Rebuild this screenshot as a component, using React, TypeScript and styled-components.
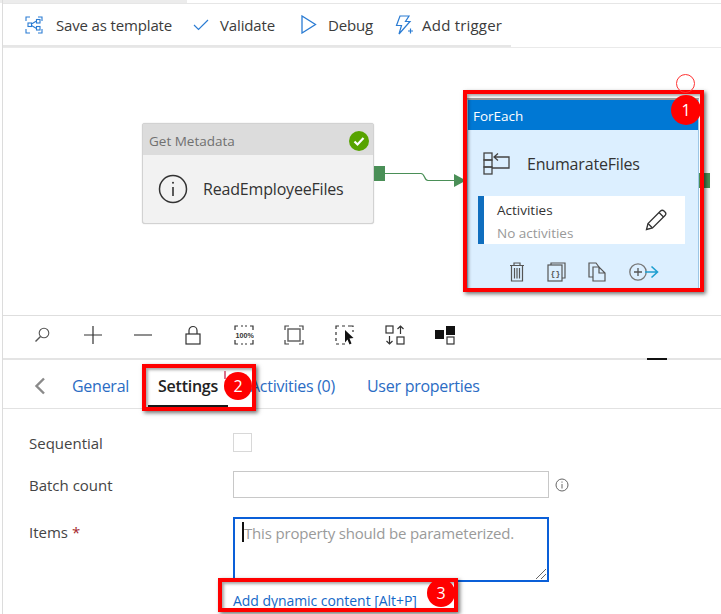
import React from 'react';
import styled, { createGlobalStyle } from 'styled-components';

const Global = createGlobalStyle`
  html, body { margin: 0; padding: 0; background: #fff; }
  body { font-family: "Open Sans", "Noto Sans", "Liberation Sans", sans-serif; color: #333; }
`;

const Page = styled.div`
  position: relative;
  width: 721px;
  height: 614px;
  overflow: hidden;
  background: #fff;
  box-sizing: border-box;
  padding-left: 3px;
  &::before {
    content: "";
    position: absolute;
    left: 2px;
    top: 0;
    bottom: 0;
    width: 1px;
    background: #dcdcdc;
  }
`;

const TopStrip = styled.div`
  height: 3px;
  margin-left: -3px;
  width: 187px;
  background: #ececec;
`;

const TopLine = styled.div`
  height: 1px;
  background: #e6e6e6;
`;

const Toolbar = styled.div`
  display: flex;
  align-items: center;
  height: 43px;
  width: 508px;
  padding-left: 22px;
  box-sizing: border-box;
  border-bottom: 2px solid #e6e6e6;
`;

const ToolButton = styled.div<{ $gap: number; $end: number; $track?: number }>`
  display: flex;
  align-items: center;
  gap: ${p => p.$gap}px;
  margin-right: ${p => p.$end}px;
  font-size: 15px;
  letter-spacing: ${p => p.$track ?? -0.15}px;
  color: #3b3b3b;
  white-space: nowrap;
`;

const Canvas = styled.div`
  position: relative;
  height: 267px;
  border-top: 1px solid #eaeaea;
  border-bottom: 1px solid #dedede;
`;

const MetaNode = styled.div`
  position: absolute;
  left: 139px;
  top: 75px;
  width: 232px;
  height: 101px;
  box-sizing: border-box;
  border: 1px solid #d2d2d2;
  border-radius: 3px;
  background: #f2f2f2;
  box-shadow: 0 0 1px #bbb;
`;

const MetaHeader = styled.div`
  height: 31px;
  box-sizing: border-box;
  display: flex;
  align-items: center;
  justify-content: space-between;
  padding: 2px 4px 0 6px;
  background: #dcdcdc;
  font-size: 13.5px;
  color: #707070;
`;

const NodeBody = styled.div<{ $pad: number; $gap: number }>`
  display: flex;
  align-items: center;
  gap: ${p => p.$gap}px;
  padding-left: ${p => p.$pad}px;
  font-size: 16px;
  letter-spacing: -0.18px;
  color: #333;
`;

const MetaBody = styled(NodeBody)`
  height: 67px;
`;

const Wire = styled.svg`
  position: absolute;
  left: 371px;
  top: 118px;
`;

const OutPort = styled.div`
  position: absolute;
  left: 695px;
  top: 125px;
  width: 12px;
  height: 15px;
  background: #4a8f57;
`;

const EachNode = styled.div`
  position: absolute;
  left: 464px;
  top: 50px;
  width: 232px;
  height: 194px;
  box-sizing: border-box;
  border: 1px solid #9cc6e6;
  border-top: 2px solid #9a9a9a;
  background: #dcefff;
`;

const EachHeader = styled.div`
  height: 30px;
  box-sizing: border-box;
  display: flex;
  align-items: center;
  padding: 2px 0 0 5px;
  background: #0078d4;
  color: #fff;
  font-size: 13.5px;
`;

const EachBody = styled(NodeBody)`
  height: 66px;
  box-sizing: border-box;
  padding-top: 2px;
`;

const ActivityCard = styled.div`
  position: relative;
  height: 48px;
  margin: 0 13px 0 10px;
  box-sizing: border-box;
  padding: 6px 0 0 13px;
  background: #fff;
  border-left: 6px solid #106ebe;
`;

const ActivityTitle = styled.div`
  font-size: 13.5px;
  line-height: 17px;
  color: #333;
`;

const ActivitySub = styled.div`
  font-size: 13.5px;
  line-height: 17px;
  margin-top: 6px;
  color: #999;
`;

const PencilSlot = styled.svg`
  position: absolute;
  right: 18px;
  top: 13px;
`;

const NodeActions = styled.div`
  display: flex;
  align-items: center;
  padding: 18px 0 0 41px;
  gap: 22px;
`;

const CanvasBar = styled.div`
  display: grid;
  grid-template-columns: repeat(9, 50.4px);
  justify-items: center;
  align-items: center;
  height: 42px;
  box-sizing: border-box;
  padding: 0 0 4px 14px;
`;

const CanvasTool = styled.svg`
  display: block;
  color: #333;
`;

const Divider = styled.div`
  position: relative;
  height: 2px;
  background: #e4e4e4;
  &::after {
    content: "";
    position: absolute;
    left: 644px;
    top: 0;
    width: 20px;
    height: 2px;
    background: #111;
  }
`;

const Tabs = styled.div`
  display: flex;
  align-items: stretch;
  height: 49px;
  border-bottom: 1px solid #e2e2e2;
  box-sizing: border-box;
  padding-left: 30px;
`;

const Chevron = styled.svg`
  align-self: center;
  margin-right: 25px;
  margin-top: 4px;
`;

const Tab = styled.div<{ $active?: boolean; $end: number }>`
  display: flex;
  align-items: center;
  padding-top: 4px;
  padding-left: ${p => (p.$active ? 10 : 0)}px;
  padding-right: ${p => (p.$active ? 10 : 0)}px;
  margin-right: ${p => p.$end}px;
  font-size: 16px;
  letter-spacing: -0.26px;
  white-space: nowrap;
  color: ${p => (p.$active ? '#222' : '#2b6cc4')};
  font-weight: ${p => (p.$active ? 600 : 400)};
  box-shadow: ${p => (p.$active ? 'inset 0 -3px 0 #1a1a1a' : 'none')};
`;

const Form = styled.div`
  display: grid;
  grid-template-columns: 204px 316px 1fr;
  grid-template-rows: 19px 27px 65px auto;
  row-gap: 19px;
  padding: 24px 0 0 26px;
  align-items: center;
  font-size: 15px;
  color: #444;
`;

const FieldLabel = styled.div<{ $top?: boolean }>`
  align-self: ${p => (p.$top ? 'start' : 'center')};
  padding-top: ${p => (p.$top ? 5 : 1)}px;
  grid-column: 1;
`;

const Required = styled.span`
  color: #a4262c;
`;

const Check = styled.div`
  grid-column: 2;
  width: 19px;
  height: 19px;
  box-sizing: border-box;
  border: 1px solid #d8d8d8;
`;

const TextBox = styled.div`
  grid-column: 2;
  height: 27px;
  box-sizing: border-box;
  border: 1px solid #c8c8c8;
`;

const InfoSlot = styled.svg`
  grid-column: 3;
  margin-left: 6px;
`;

const Spacer = styled.div`
  grid-column: 3;
`;

const AreaBox = styled.div`
  position: relative;
  grid-column: 2;
  height: 65px;
  box-sizing: border-box;
  border: 2px solid #0a5fd8;
  padding: 3px 0 0 9px;
  font-size: 15px;
  letter-spacing: -0.17px;
  line-height: 22px;
  color: #9a9a9a;
  white-space: nowrap;
`;

const Caret = styled.span`
  position: absolute;
  left: 7px;
  top: 3px;
  width: 2px;
  height: 20px;
  background: #111;
`;

const Grip = styled.svg`
  position: absolute;
  right: 0;
  bottom: 0;
`;

const DynLink = styled.div`
  grid-column: 2;
  margin-top: -8px;
  font-size: 14px;
  letter-spacing: -0.05px;
  line-height: 16px;
  color: #1468c8;
  white-space: nowrap;
`;

const RedFrame = styled.div<{ $x: number; $y: number; $w: number; $h: number }>`
  position: absolute;
  left: ${p => p.$x}px;
  top: ${p => p.$y}px;
  width: ${p => p.$w}px;
  height: ${p => p.$h}px;
  box-sizing: border-box;
  border: 4px solid #f00;
  box-shadow: 2px 2px 4px rgba(0, 0, 0, 0.55), inset 2px 2px 3px rgba(0, 0, 0, 0.35);
  pointer-events: none;
`;

const Badge = styled.div<{ $x: number; $y: number; $d: number }>`
  position: absolute;
  left: ${p => p.$x}px;
  top: ${p => p.$y}px;
  width: ${p => p.$d}px;
  height: ${p => p.$d}px;
  border-radius: 50%;
  background: #f00;
  color: #fff;
  font-size: 16px;
  display: flex;
  align-items: center;
  justify-content: center;
`;

const Ring = styled.div`
  position: absolute;
  left: 676px;
  top: 74px;
  width: 19px;
  height: 19px;
  box-sizing: border-box;
  border: 1.5px solid #f33;
  border-radius: 50%;
`;

const TabRemnant = styled.div`
  position: absolute;
  left: 224px;
  top: 371px;
  width: 2px;
  height: 8px;
  background: #d9708a;
`;

const blue = '#2b7cd3';

const SaveIcon = () => (
  <svg width="18" height="18" viewBox="0 0 18 18" fill="none" stroke={blue} strokeWidth="1.1">
    <path d="M1 5V1h4M13 1h4v4M1 13v4h4M13 17h4v-4" />
    <rect x="11.5" y="3.5" width="3.5" height="3.5" />
    <rect x="11.5" y="10.5" width="3.5" height="3.5" />
    <rect x="3" y="7" width="3.5" height="3.5" />
    <path d="M6.5 8l5-3M6.5 9.5l5 3" />
  </svg>
);
const CheckIcon = () => (
  <svg width="16" height="12" viewBox="0 0 16 12" fill="none" stroke={blue} strokeWidth="1.2">
    <path d="M1 6l4.5 4.5L15 1" />
  </svg>
);
const PlayIcon = () => (
  <svg width="16" height="19" viewBox="0 0 16 19" fill="none" stroke={blue} strokeWidth="1.3">
    <path d="M1 1v17l13.5-8.5z" />
  </svg>
);
const BoltIcon = () => (
  <svg width="19" height="20" viewBox="0 0 19 20" fill="none" stroke={blue} strokeWidth="1.2">
    <path d="M5 1h9l-3.5 5.5H15L4 19l2.5-8.5H1.5z" />
    <path d="M13 16h5M15.5 13.5v5" />
  </svg>
);

const SmallInfo = () => (
  <svg width="30" height="30" viewBox="0 0 30 30" fill="none" stroke="#333" strokeWidth="1.5">
    <circle cx="15" cy="15" r="13.5" />
    <path d="M15 13v9" strokeWidth="1.6" />
    <circle cx="15" cy="8.8" r="1" fill="#333" stroke="none" />
  </svg>
);

const ForEachGlyph = () => (
  <svg width="28" height="24" viewBox="0 0 28 24" fill="none" stroke="#444" strokeWidth="1.3">
    <rect x="1" y="1" width="8" height="7" />
    <rect x="1" y="8" width="8" height="7" />
    <rect x="1" y="15" width="8" height="7" />
    <path d="M9 16h17V5H11M15 1.5L11 5l4 3.5" />
  </svg>
);

const Trash = () => (
  <svg width="16" height="20" viewBox="0 0 16 20" fill="none" stroke="#555" strokeWidth="1.2">
    <path d="M1 3.5h14M5 3.5V1h6v2.5M2.5 3.5V19h11V3.5M5.5 6v10.5M8 6v10.5M10.5 6v10.5" />
  </svg>
);
const CodeCopy = () => (
  <svg width="19" height="20" viewBox="0 0 19 20" fill="none" stroke="#555" strokeWidth="1.2">
    <rect x="1" y="3" width="14" height="16" />
    <path d="M4 3V1h14v15h-3" />
    <text x="3.6" y="14" fontSize="8" fontWeight="700" fill="#555" stroke="none" fontFamily="Liberation Mono">{'{}'}</text>
  </svg>
);
const Pages = () => (
  <svg width="18" height="20" viewBox="0 0 18 20" fill="none" stroke="#555" strokeWidth="1.2">
    <path d="M5 15H1V1h7l3 4" />
    <path d="M5 5h6l6 6v8H5zM11 5v6h6" />
  </svg>
);
const AddFlow = () => (
  <svg width="31" height="18" viewBox="0 0 31 18" fill="none" strokeWidth="1.3">
    <circle cx="10" cy="9" r="8.2" stroke="#777" />
    <path d="M6 9h8M10 5v8" stroke="#555" />
    <path d="M17 9h12M23.5 3.5L29.5 9l-6 5.5" stroke="#1e9fd0" strokeWidth="1.6" />
  </svg>
);

const App = () => (
  <Page>
    <Global />
    <TopStrip />
    <TopLine />
    <Toolbar>
      <ToolButton $gap={13} $end={21}><SaveIcon />Save as template</ToolButton>
      <ToolButton $gap={11} $end={26}><CheckIcon />Validate</ToolButton>
      <ToolButton $gap={11} $end={22}><PlayIcon />Debug</ToolButton>
      <ToolButton $gap={8} $end={0} $track={0.2}><BoltIcon />Add trigger</ToolButton>
    </Toolbar>
    <Canvas>
      <MetaNode>
        <MetaHeader>
          Get Metadata
          <svg width="20" height="20" viewBox="0 0 20 20">
            <circle cx="10" cy="10" r="10" fill="#57a300" />
            <path d="M5.5 10.5l3 3 6-6.5" fill="none" stroke="#fff" strokeWidth="2.2" />
          </svg>
        </MetaHeader>
        <MetaBody $pad={15} $gap={15}>
          <SmallInfo />
          ReadEmployeeFiles
        </MetaBody>
      </MetaNode>
      <Wire width="94" height="30" viewBox="0 0 94 30">
        <rect x="0" y="0" width="11" height="15" fill="#4a8f57" />
        <path d="M11 7.5h36c4 0 3 7 7 7h26" fill="none" stroke="#4a8f57" strokeWidth="1.2" />
        <path d="M80 8l12 6.5-12 6.5z" fill="#4a8f57" />
      </Wire>
      <OutPort />
      <EachNode>
        <EachHeader>ForEach</EachHeader>
        <EachBody $pad={15} $gap={16}>
          <ForEachGlyph />
          EnumarateFiles
        </EachBody>
        <ActivityCard>
          <ActivityTitle>Activities</ActivityTitle>
          <ActivitySub>No activities</ActivitySub>
          <PencilSlot width="22" height="22" viewBox="0 0 22 22" fill="none" stroke="#333" strokeWidth="1.3">
            <path d="M1.5 20.5l1.5-6L15.5 2c1-1 2.5-1 3.5 0l1 1c1 1 1 2.5 0 3.5L7.5 19z" />
            <path d="M3 14.5l4.5 4.5M14 3.5l4.5 4.5" />
          </PencilSlot>
        </ActivityCard>
        <NodeActions>
          <Trash />
          <CodeCopy />
          <Pages />
          <AddFlow />
        </NodeActions>
      </EachNode>
    </Canvas>
    <CanvasBar>
      <CanvasTool width="16" height="16" viewBox="0 0 16 16" fill="none" stroke="#555" strokeWidth="1.1">
        <circle cx="10" cy="6" r="4.8" />
        <path d="M6.5 9.5L1.5 14.5" strokeWidth="1.5" />
      </CanvasTool>
      <CanvasTool width="20" height="20" viewBox="0 0 20 20" fill="none" stroke="#333" strokeWidth="1.2">
        <path d="M1 10h18M10 1v18" />
      </CanvasTool>
      <CanvasTool width="20" height="20" viewBox="0 0 20 20" fill="none" stroke="#444" strokeWidth="1.2">
        <path d="M1 10h18" />
      </CanvasTool>
      <CanvasTool width="16" height="20" viewBox="0 0 16 20" fill="none" stroke="#333" strokeWidth="1.2">
        <rect x="1" y="9" width="14" height="10" />
        <path d="M4 9V5.5a4 4 0 018 0V9" />
      </CanvasTool>
      <CanvasTool width="20" height="20" viewBox="0 0 20 20" fill="none" stroke="#333" strokeWidth="1.2">
        <path d="M1 5V1h3M16 1h3v4M1 15v4h3M16 19h3v-4M7 1h2M11 1h2M7 19h2M11 19h2" />
        <text x="1.5" y="12.5" fontSize="7.2" fontWeight="700" fill="#333" stroke="none" fontFamily="Liberation Sans">100%</text>
      </CanvasTool>
      <CanvasTool width="20" height="20" viewBox="0 0 20 20" fill="none" stroke="#444" strokeWidth="1.2">
        <path d="M1 5V1h4M15 1h4v4M1 15v4h4M15 19h4v-4" />
        <rect x="4" y="4" width="12" height="12" strokeWidth="1.5" stroke="#666" />
      </CanvasTool>
      <CanvasTool width="20" height="20" viewBox="0 0 20 20" fill="none" stroke="#333" strokeWidth="1.2">
        <path d="M1 4V1h3M7 1h3M13 1h5v1M1 7v3M1 13v3M1 19h3M7 19h3M18 5v2" />
        <path d="M10 5l8.5 8-4 .5 2 5-2 1-2-5-2.5 3z" fill="#111" stroke="none" />
      </CanvasTool>
      <CanvasTool width="20" height="20" viewBox="0 0 20 20" fill="none" stroke="#333" strokeWidth="1.2">
        <rect x="1" y="1" width="7" height="7" />
        <rect x="12" y="12" width="7" height="7" />
        <path d="M15.5 9V1M12.5 4l3-3 3 3M4.5 11v8M1.5 16l3 3 3-3" />
      </CanvasTool>
      <CanvasTool width="20" height="20" viewBox="0 0 20 20">
        <rect x="0" y="5" width="9" height="9" fill="#111" />
        <rect x="11" y="1" width="9" height="9" fill="#111" />
        <rect x="12" y="12" width="7" height="7" fill="none" stroke="#333" strokeWidth="1.2" />
      </CanvasTool>
    </CanvasBar>
    <Divider />
    <Tabs>
      <Chevron width="14" height="18" viewBox="0 0 14 18" fill="none" stroke="#8a8a8a" strokeWidth="2.4">
        <path d="M11 1.5L3.5 9l7.5 7.5" />
      </Chevron>
      <Tab $end={19}>General</Tab>
      <Tab $active $end={22}>Settings</Tab>
      <Tab $end={32}>Activities (0)</Tab>
      <Tab $end={0}>User properties</Tab>
    </Tabs>
    <Form>
      <FieldLabel>Sequential</FieldLabel>
      <Check />
      <Spacer />
      <FieldLabel>Batch count</FieldLabel>
      <TextBox />
      <InfoSlot width="14" height="14" viewBox="0 0 14 14" fill="none" stroke="#666" strokeWidth="1">
        <circle cx="7" cy="7" r="6" />
        <path d="M7 6v4.5M7 3.5v1.2" />
      </InfoSlot>
      <FieldLabel $top>Items <Required>*</Required></FieldLabel>
      <AreaBox>
        <Caret />
        This property should be parameterized.
        <Grip width="12" height="12" viewBox="0 0 12 12" fill="none" stroke="#666" strokeWidth="1">
          <path d="M1 11L11 1M6 11l5-5" />
        </Grip>
      </AreaBox>
      <Spacer />
      <DynLink>Add dynamic content [Alt+P]</DynLink>
    </Form>
    <RedFrame $x={463} $y={90} $w={241} $h={202} />
    <Ring />
    <Badge $x={671} $y={95} $d={30}>1</Badge>
    <RedFrame $x={142} $y={364} $w={114} $h={47} />
    <TabRemnant />
    <Badge $x={224} $y={372} $d={28}>2</Badge>
    <RedFrame $x={218} $y={578} $w={240} $h={34} />
    <Badge $x={427} $y={579} $d={28}>3</Badge>
  </Page>
);

export default App;
